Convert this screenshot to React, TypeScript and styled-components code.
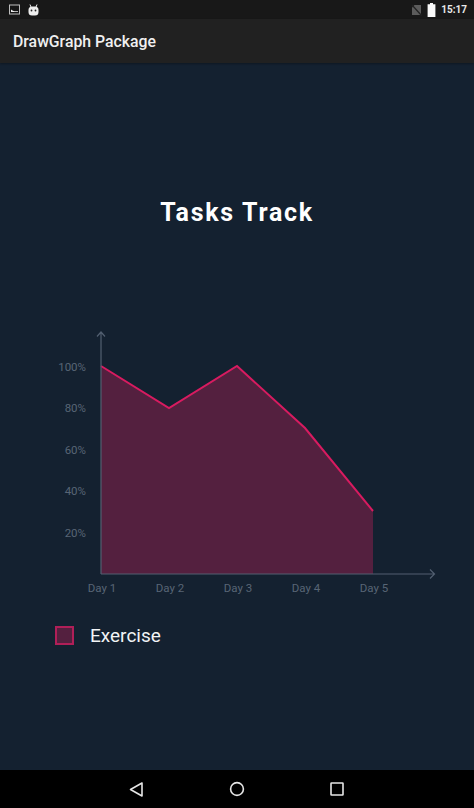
import { createGlobalStyle, styled } from 'styled-components'

const GlobalStyle = createGlobalStyle`
  html, body {
    margin: 0;
    padding: 0;
    background: #000;
  }
`

const Screen = styled.div`
  width: 474px;
  height: 808px;
  display: flex;
  flex-direction: column;
  overflow: hidden;
  font-family: Roboto, 'Liberation Sans', sans-serif;
`

const StatusBar = styled.div`
  height: 19px;
  flex: none;
  display: flex;
  align-items: center;
  justify-content: space-between;
  padding: 0 7px 0 9px;
  background: #181818;
`

const StatusGroup = styled.div<{ $gap: number }>`
  display: flex;
  align-items: center;
  gap: ${(p) => p.$gap}px;
`

const Clock = styled.span`
  color: #e8e8e8;
  font-size: 10px;
  font-weight: 700;
`

const AppBar = styled.div`
  height: 44px;
  flex: none;
  display: flex;
  align-items: center;
  padding-left: 13px;
  background: #212121;
  color: #f0f0f0;
  font-size: 15.8px;
  font-weight: 500;
  box-shadow: 0 1px 2px rgba(0, 0, 0, 0.3);
  z-index: 1;
`

const Content = styled.main`
  flex: 1;
  display: flex;
  flex-direction: column;
  padding-top: 134px;
  background: #142130;
`

const Title = styled.h1`
  margin: 0;
  height: 32px;
  line-height: 32px;
  text-align: center;
  color: #fff;
  font-size: 25px;
  font-weight: 700;
  letter-spacing: 1.7px;
`

const Chart = styled.svg`
  display: block;
  flex: none;
  margin-top: 99px;
`

const AxisLabel = styled.text`
  fill: #586575;
  font-family: Roboto, 'Liberation Sans', sans-serif;
  font-size: 11.5px;
`

const Legend = styled.div`
  display: flex;
  align-items: center;
  gap: 16px;
  margin: 24px 0 0 55px;
  color: #f2f4f6;
  font-size: 19px;
`

const Swatch = styled.span`
  width: 15px;
  height: 15px;
  border: 2px solid #b01f58;
  background: #54203f;
`

const NavBar = styled.nav`
  height: 38px;
  flex: none;
  display: flex;
  align-items: center;
  justify-content: center;
  gap: 85px;
  padding-right: 2px;
  background: #000;
`

const ImageIcon = () => (
  <svg width="11" height="11" viewBox="0 0 11 11">
    <rect x="0.5" y="1" width="10" height="9" fill="#151515" stroke="#bdbdbd" />
    <path d="M2 8V5.5l2 1.2 1.5.6H9V8z" fill="#ececec" />
  </svg>
)

const RobotIcon = () => (
  <svg width="11" height="12" viewBox="0 0 11 12">
    <path d="M2 0.5 3 3M9 0.5 8 3" stroke="#eee" strokeWidth="1" />
    <rect x="0.5" y="2.5" width="10" height="9" rx="3.5" fill="#eee" />
    <circle cx="3.5" cy="6.5" r="0.9" fill="#222" />
    <circle cx="7.5" cy="6.5" r="0.9" fill="#222" />
  </svg>
)

const NoSimIcon = () => (
  <svg width="11" height="12" viewBox="0 0 11 12">
    <path d="M3.5 1H10v10H1V3.5z" fill="#5c5c5c" />
    <path d="M1 1 10.5 11.5" stroke="#222" strokeWidth="1.2" />
  </svg>
)

const BatteryIcon = () => (
  <svg width="9" height="14" viewBox="0 0 9 14">
    <path d="M3 0h3v1.2h2.4V14H.6V1.2H3z" fill="#fafafa" />
  </svg>
)

const BackIcon = () => (
  <svg width="16" height="17" viewBox="0 0 16 17">
    <path d="M14 2v13L2.5 8.5z" fill="none" stroke="#e6e6e6" strokeWidth="1.6" strokeLinejoin="round" />
  </svg>
)

const HomeIcon = () => (
  <svg width="16" height="16" viewBox="0 0 16 16">
    <circle cx="8" cy="8" r="6.4" fill="none" stroke="#e6e6e6" strokeWidth="1.6" />
  </svg>
)

const RecentsIcon = () => (
  <svg width="14" height="14" viewBox="0 0 14 14">
    <rect x="1" y="1" width="12" height="12" rx="0.5" fill="none" stroke="#e6e6e6" strokeWidth="1.6" />
  </svg>
)

const yLabels = [
  { text: '100%', y: 371 },
  { text: '80%', y: 412 },
  { text: '60%', y: 454 },
  { text: '40%', y: 495 },
  { text: '20%', y: 537 },
]

const xLabels = [
  { text: 'Day 1', x: 102 },
  { text: 'Day 2', x: 170 },
  { text: 'Day 3', x: 238 },
  { text: 'Day 4', x: 306 },
  { text: 'Day 5', x: 374 },
]

const points = '101,366 169,408 237,366 305,428 373,511'

// chart coordinates are page coordinates, the viewBox starts where the svg sits
const TaskChart = () => (
  <Chart width="474" height="272" viewBox="0 328 474 272">
    <polygon points={`${points} 373,574 101,574`} fill="#54203f" />
    <polyline points={points} fill="none" stroke="#d81b60" strokeWidth="2" />
    <path d="M101 574V332M97 336.5l4-4.5 4 4.5" fill="none" stroke="#525f70" strokeWidth="1.2" />
    <path d="M101 574H434M430 569.5l4.5 4.5-4.5 4.5" fill="none" stroke="#525f70" strokeWidth="1.2" />
    {yLabels.map((l) => (
      <AxisLabel key={l.text} x="86" y={l.y} textAnchor="end">
        {l.text}
      </AxisLabel>
    ))}
    {xLabels.map((l) => (
      <AxisLabel key={l.text} x={l.x} y="592" textAnchor="middle">
        {l.text}
      </AxisLabel>
    ))}
  </Chart>
)

const App = () => (
  <>
    <GlobalStyle />
    <Screen>
      <StatusBar>
        <StatusGroup $gap={8}>
          <ImageIcon />
          <RobotIcon />
        </StatusGroup>
        <StatusGroup $gap={5}>
          <NoSimIcon />
          <BatteryIcon />
          <Clock>15:17</Clock>
        </StatusGroup>
      </StatusBar>
      <AppBar>DrawGraph Package</AppBar>
      <Content>
        <Title>Tasks Track</Title>
        <TaskChart />
        <Legend>
          <Swatch />
          Exercise
        </Legend>
      </Content>
      <NavBar>
        <BackIcon />
        <HomeIcon />
        <RecentsIcon />
      </NavBar>
    </Screen>
  </>
)

export default App
